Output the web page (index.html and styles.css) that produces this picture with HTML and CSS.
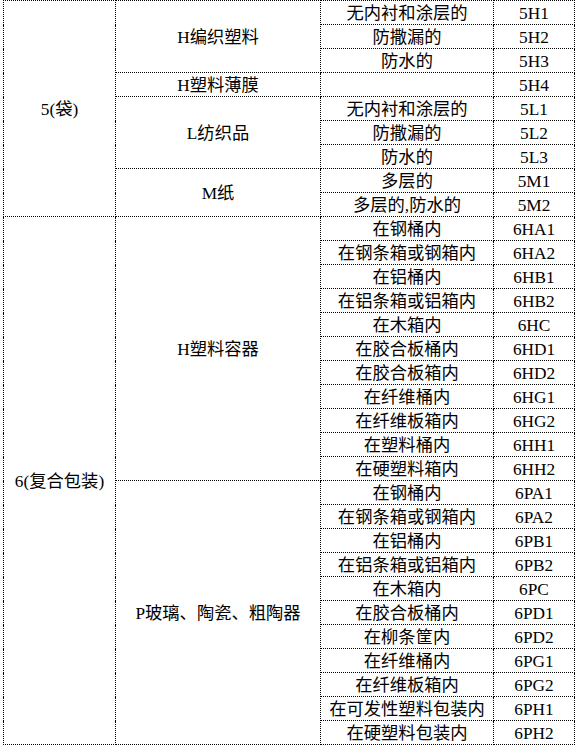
FILE: index.html
```html
<!DOCTYPE html>
<html lang="zh-CN">
<head>
<meta charset="utf-8">
<title>复合包装代码</title>
<link rel="stylesheet" href="styles.css">
</head>
<body>
<table class="codes">
<colgroup><col class="c-type"><col class="c-mat"><col class="c-kind"><col class="c-code"></colgroup>
<tbody>
<tr><td rowspan="9">5(袋)</td><td rowspan="3">H编织塑料</td><td>无内衬和涂层的</td><td>5H1</td></tr>
<tr><td>防撒漏的</td><td>5H2</td></tr>
<tr><td>防水的</td><td>5H3</td></tr>
<tr><td>H塑料薄膜</td><td></td><td>5H4</td></tr>
<tr><td rowspan="3">L纺织品</td><td>无内衬和涂层的</td><td>5L1</td></tr>
<tr><td>防撒漏的</td><td>5L2</td></tr>
<tr><td>防水的</td><td>5L3</td></tr>
<tr><td rowspan="2">M纸</td><td>多层的</td><td>5M1</td></tr>
<tr><td>多层的,防水的</td><td>5M2</td></tr>
<tr><td rowspan="22">6(复合包装)</td><td rowspan="11">H塑料容器</td><td>在钢桶内</td><td>6HA1</td></tr>
<tr><td>在钢条箱或钢箱内</td><td>6HA2</td></tr>
<tr><td>在铝桶内</td><td>6HB1</td></tr>
<tr><td>在铝条箱或铝箱内</td><td>6HB2</td></tr>
<tr><td>在木箱内</td><td>6HC</td></tr>
<tr><td>在胶合板桶内</td><td>6HD1</td></tr>
<tr><td>在胶合板箱内</td><td>6HD2</td></tr>
<tr><td>在纤维桶内</td><td>6HG1</td></tr>
<tr><td>在纤维板箱内</td><td>6HG2</td></tr>
<tr><td>在塑料桶内</td><td>6HH1</td></tr>
<tr><td>在硬塑料箱内</td><td>6HH2</td></tr>
<tr><td rowspan="11">P玻璃、陶瓷、粗陶器</td><td>在钢桶内</td><td>6PA1</td></tr>
<tr><td>在钢条箱或钢箱内</td><td>6PA2</td></tr>
<tr><td>在铝桶内</td><td>6PB1</td></tr>
<tr><td>在铝条箱或铝箱内</td><td>6PB2</td></tr>
<tr><td>在木箱内</td><td>6PC</td></tr>
<tr><td>在胶合板桶内</td><td>6PD1</td></tr>
<tr><td>在柳条筐内</td><td>6PD2</td></tr>
<tr><td>在纤维桶内</td><td>6PG1</td></tr>
<tr><td>在纤维板箱内</td><td>6PG2</td></tr>
<tr><td>在可发性塑料包装内</td><td>6PH1</td></tr>
<tr><td>在硬塑料包装内</td><td>6PH2</td></tr>
</tbody>
</table>
</body>
</html>
```

FILE: styles.css
```css
html, body {
  margin: 0;
  padding: 0;
  background: #fff;
}
body {
  padding-left: 3px;
}
.codes {
  border-collapse: collapse;
  table-layout: fixed;
  width: 571px;
  font-family: "Liberation Serif", "Noto Sans CJK SC", serif;
  font-size: 17.3px;
  color: #000;
}
.c-type { width: 112px; }
.c-mat { width: 205px; }
.c-kind { width: 173px; }
.c-code { width: 81px; }
.codes td {
  border: 1px dotted #000;
  padding: 2px 0 0 0;
  height: 21px;
  line-height: 21px;
  text-align: center;
  vertical-align: middle;
  white-space: nowrap;
  overflow: hidden;
}
```
